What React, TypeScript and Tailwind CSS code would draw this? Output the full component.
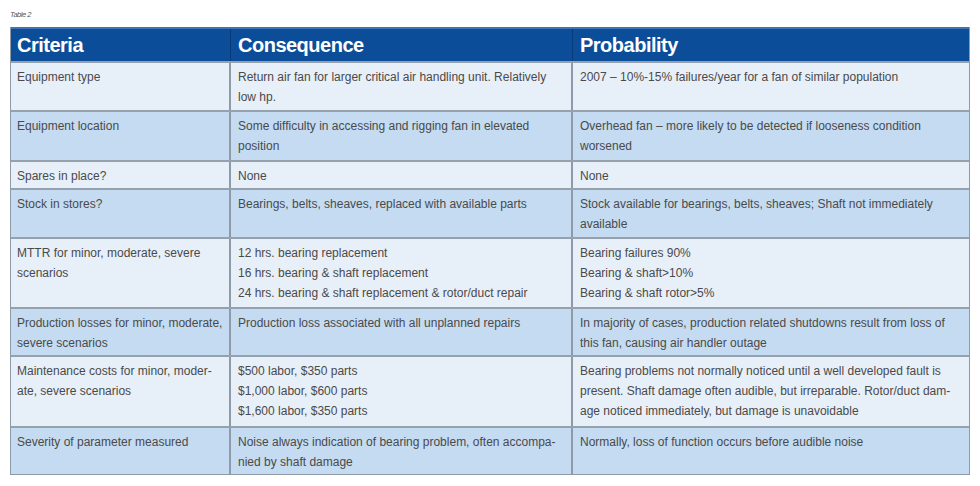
import React from "react";

type Row = {
  h: string;
  bg: string;
  c: string[];
  q: string[];
  p: string[];
};

const LIGHT = "bg-[#e7eff9]";
const BLUE = "bg-[#c4dbf1]";

const rows: Row[] = [
  {
    h: "h-[49px]",
    bg: LIGHT,
    c: ["Equipment type"],
    q: ["Return air fan for larger critical air handling unit. Relatively", "low hp."],
    p: ["2007 – 10%-15% failures/year for a fan of similar population"],
  },
  {
    h: "h-[50px]",
    bg: BLUE,
    c: ["Equipment location"],
    q: ["Some difficulty in accessing and rigging fan in elevated", "position"],
    p: ["Overhead fan – more likely to be detected if looseness condition", "worsened"],
  },
  {
    h: "h-[28px]",
    bg: LIGHT,
    c: ["Spares in place?"],
    q: ["None"],
    p: ["None"],
  },
  {
    h: "h-[49px]",
    bg: BLUE,
    c: ["Stock in stores?"],
    q: ["Bearings, belts, sheaves, replaced with available parts"],
    p: ["Stock available for bearings, belts, sheaves; Shaft not immediately", "available"],
  },
  {
    h: "h-[70px]",
    bg: LIGHT,
    c: ["MTTR for minor, moderate, severe", "scenarios"],
    q: [
      "12 hrs. bearing replacement",
      "16 hrs. bearing & shaft replacement",
      "24 hrs. bearing & shaft replacement & rotor/duct repair",
    ],
    p: ["Bearing failures 90%", "Bearing & shaft>10%", "Bearing & shaft rotor>5%"],
  },
  {
    h: "h-[48px]",
    bg: BLUE,
    c: ["Production losses for minor, moderate,", "severe scenarios"],
    q: ["Production loss associated with all unplanned repairs"],
    p: [
      "In majority of cases, production related shutdowns result from loss of",
      "this fan, causing air handler outage",
    ],
  },
  {
    h: "h-[71px]",
    bg: LIGHT,
    c: ["Maintenance costs for minor, moder-", "ate, severe scenarios"],
    q: ["$500 labor, $350 parts", "$1,000 labor, $600 parts", "$1,600 labor, $350 parts"],
    p: [
      "Bearing problems not normally noticed until a well developed fault is",
      "present. Shaft damage often audible, but irreparable. Rotor/duct dam-",
      "age noticed immediately, but damage is unavoidable",
    ],
  },
  {
    h: "h-[48px]",
    bg: BLUE,
    c: ["Severity of parameter measured"],
    q: ["Noise always indication of bearing problem, often accompa-", "nied by shaft damage"],
    p: ["Normally, loss of function occurs before audible noise"],
  },
];

function Lines({ lines }: { lines: string[] }) {
  return (
    <>
      {lines.map((l, i) => (
        <div key={i} className="whitespace-nowrap">
          {l}
        </div>
      ))}
    </>
  );
}

export default function App() {
  return (
    <div className="w-[980px] h-[486px] bg-white overflow-hidden font-['Liberation_Sans',Arial,sans-serif]">
      <div className="pl-[10px] pt-[10px] h-[27px] text-[7.5px] italic text-[#555] leading-[10px] tracking-[-0.5px]">
        Table 2
      </div>
      <div className="ml-[10px] w-[960px] border border-[#8e9aa7] border-t-0">
        <div className="grid grid-cols-[220px_342px_1fr] h-[34px] bg-[#0c4d9a] border-t-2 border-[#3f73b4] text-white font-bold text-[20px] tracking-[-0.5px] leading-[32px]">
          <div className="pl-[6px] border-r border-[#083a78]">Criteria</div>
          <div className="pl-[7px] border-r border-[#083a78]">Consequence</div>
          <div className="pl-[7px]">Probability</div>
        </div>
        {rows.map((r, i) => (
          <div
            key={i}
            className={`grid grid-cols-[220px_342px_1fr] ${r.h} ${r.bg} border-t-2 border-[#95a1ad] text-[12px] leading-[20px] text-[#4a4a4a]`}
          >
            <div className="pl-[6px] pt-[4px] border-r-2 border-[#8e9aa7]">
              <Lines lines={r.c} />
            </div>
            <div className="pl-[7px] pt-[4px] border-r-2 border-[#8e9aa7]">
              <Lines lines={r.q} />
            </div>
            <div className="pl-[7px] pt-[4px]">
              <Lines lines={r.p} />
            </div>
          </div>
        ))}
      </div>
    </div>
  );
}
